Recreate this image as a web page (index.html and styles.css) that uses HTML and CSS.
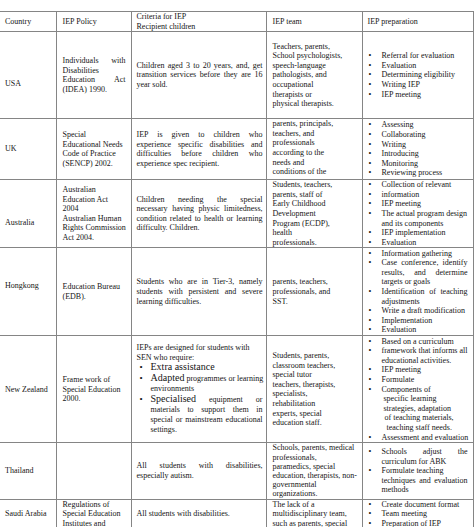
FILE: index.html
```html
<!DOCTYPE html>
<html>
<head>
<meta charset="utf-8">
<link rel="stylesheet" href="styles.css">
</head>
<body>
<table class="iep">
  <colgroup>
    <col class="w1"><col class="w2"><col class="w3"><col class="w4"><col class="w5">
  </colgroup>
  <tr class="r-head">
    <td>Country</td>
    <td class="c2">IEP Policy</td>
    <td class="c3"><span class="l">Criteria for IEP</span><span class="l">Recipient children</span></td>
    <td class="c4">IEP team</td>
    <td class="c5h">IEP preparation</td>
  </tr>
  <tr class="r-usa">
    <td class="c1 down">USA</td>
    <td class="c2">
      <span class="j">Individuals with</span>
      <span class="l">Disabilities</span>
      <span class="j">Education Act</span>
      <span class="l">(IDEA) 1990.</span>
    </td>
    <td class="c3">
      <span class="j">Children aged 3 to 20 years, and, get</span>
      <span class="j">transition services before they are 16</span>
      <span class="l">year sold.</span>
    </td>
    <td class="c4">
      <span class="l">Teachers, parents,</span>
      <span class="l">School psychologists,</span>
      <span class="l">speech-language</span>
      <span class="l">pathologists, and</span>
      <span class="l">occupational</span>
      <span class="l">therapists or</span>
      <span class="l">physical therapists.</span>
    </td>
    <td class="c5">
      <ul class="bl">
        <li><span class="b">•</span><span class="t">Referral for evaluation</span></li>
        <li><span class="b">•</span><span class="t">Evaluation</span></li>
        <li><span class="b">•</span><span class="t">Determining eligibility</span></li>
        <li><span class="b">•</span><span class="t">Writing IEP</span></li>
        <li><span class="b">•</span><span class="t">IEP meeting</span></li>
      </ul>
    </td>
  </tr>
  <tr class="r-uk">
    <td class="c1">UK</td>
    <td class="c2">
      <span class="l">Special</span>
      <span class="l">Educational Needs</span>
      <span class="l">Code of Practice</span>
      <span class="l">(SENCP) 2002.</span>
    </td>
    <td class="c3">
      <span class="j">IEP is given to children who</span>
      <span class="j">experience specific disabilities and</span>
      <span class="j">difficulties before children who</span>
      <span class="l">experience spec recipient.</span>
    </td>
    <td class="c4 top">
      <span class="l">parents, principals,</span>
      <span class="l">teachers, and</span>
      <span class="l">professionals</span>
      <span class="l">according to the</span>
      <span class="l">needs and</span>
      <span class="l">conditions of the</span>
    </td>
    <td class="c5">
      <ul class="bl">
        <li><span class="b">•</span><span class="t">Assessing</span></li>
        <li><span class="b">•</span><span class="t">Collaborating</span></li>
        <li><span class="b">•</span><span class="t">Writing</span></li>
        <li><span class="b">•</span><span class="t">Introducing</span></li>
        <li><span class="b">•</span><span class="t">Monitoring</span></li>
        <li><span class="b">•</span><span class="t">Reviewing process</span></li>
      </ul>
    </td>
  </tr>
  <tr class="r-au">
    <td class="c1 down">Australia</td>
    <td class="c2">
      <span class="l">Australian</span>
      <span class="l">Education Act</span>
      <span class="l">2004</span>
      <span class="l">Australian Human</span>
      <span class="l">Rights Commission</span>
      <span class="l">Act 2004.</span>
    </td>
    <td class="c3">
      <span class="j">Children needing the special</span>
      <span class="j">necessary having physic limitedness,</span>
      <span class="j">condition related to health or learning</span>
      <span class="l">difficulty. Children.</span>
    </td>
    <td class="c4">
      <span class="l">Students, teachers,</span>
      <span class="l">parents, staff of</span>
      <span class="l">Early Childhood</span>
      <span class="l">Development</span>
      <span class="l">Program (ECDP),</span>
      <span class="l">health</span>
      <span class="l">professionals.</span>
    </td>
    <td class="c5">
      <ul class="bl">
        <li><span class="b">•</span><span class="t">Collection of relevant</span></li>
        <li><span class="b">•</span><span class="t">information</span></li>
        <li><span class="b">•</span><span class="t">IEP meeting</span></li>
        <li><span class="b">•</span><span class="t"><span class="l">The actual program design</span><span class="l">and its components</span></span></li>
        <li><span class="b">•</span><span class="t">IEP implementation</span></li>
        <li><span class="b">•</span><span class="t">Evaluation</span></li>
      </ul>
    </td>
  </tr>
  <tr class="r-hk">
    <td class="c1 up">Hongkong</td>
    <td class="c2">
      <span class="l">Education Bureau</span>
      <span class="l">(EDB).</span>
    </td>
    <td class="c3">
      <span class="j">Students who are in Tier-3, namely</span>
      <span class="j">students with persistent and severe</span>
      <span class="l">learning difficulties.</span>
    </td>
    <td class="c4">
      <span class="l">parents, teachers,</span>
      <span class="l">professionals, and</span>
      <span class="l">SST.</span>
    </td>
    <td class="c5">
      <ul class="bl">
        <li><span class="b">•</span><span class="t">Information gathering</span></li>
        <li><span class="b">•</span><span class="t"><span class="j">Case conference, identify</span><span class="j">results, and determine</span><span class="l">targets or goals</span></span></li>
        <li><span class="b">•</span><span class="t"><span class="j">Identification of teaching</span><span class="l">adjustments</span></span></li>
        <li><span class="b">•</span><span class="t">Write a draft modification</span></li>
        <li><span class="b">•</span><span class="t">Implementation</span></li>
        <li><span class="b">•</span><span class="t">Evaluation</span></li>
      </ul>
    </td>
  </tr>
  <tr class="r-nz">
    <td class="c1">New Zealand</td>
    <td class="c2">
      <span class="l">Frame work of</span>
      <span class="l">Special Education</span>
      <span class="l">2000.</span>
    </td>
    <td class="c3">
      <span class="l">IEPs are designed for students with</span>
      <span class="l">SEN who require:</span>
      <ul class="bl big">
        <li><span class="b">•</span><span class="t"><span class="lg">Extra assistance</span></span></li>
        <li><span class="b">•</span><span class="t"><span class="l"><span class="lg">Adapted</span> programmes or learning</span><span class="l">environments</span></span></li>
        <li><span class="b">•</span><span class="t"><span class="j"><span class="lg">Specialised</span> equipment or</span><span class="j">materials to support them in</span><span class="j">special or mainstream educational</span><span class="l">settings.</span></span></li>
      </ul>
    </td>
    <td class="c4">
      <span class="l">Students, parents,</span>
      <span class="l">classroom teachers,</span>
      <span class="l">special tutor</span>
      <span class="l">teachers, therapists,</span>
      <span class="l">specialists,</span>
      <span class="l">rehabilitation</span>
      <span class="l">experts, special</span>
      <span class="l">education staff.</span>
    </td>
    <td class="c5">
      <ul class="bl">
        <li><span class="b">•</span><span class="t">Based on a curriculum</span></li>
        <li><span class="b">•</span><span class="t"><span class="j">framework that informs all</span><span class="l">educational activities.</span></span></li>
        <li><span class="b">•</span><span class="t">IEP meeting</span></li>
        <li><span class="b">•</span><span class="t">Formulate</span></li>
        <li><span class="b">•</span><span class="t"><span class="l">Components of</span><span class="l i2">specific learning</span><span class="l i2">strategies, adaptation</span><span class="l i3">of teaching materials,</span><span class="l i5">teaching staff needs.</span></span></li>
        <li><span class="b">•</span><span class="t">Assessment and evaluation</span></li>
      </ul>
    </td>
  </tr>
  <tr class="r-th">
    <td class="c1">Thailand</td>
    <td class="c2"></td>
    <td class="c3">
      <span class="j">All students with disabilities,</span>
      <span class="l">especially autism.</span>
    </td>
    <td class="c4 tight">
      <span class="l">Schools, parents, medical</span>
      <span class="l">professionals,</span>
      <span class="l">paramedics, special</span>
      <span class="l">education, therapists, non-</span>
      <span class="l">governmental</span>
      <span class="l">organizations.</span>
    </td>
    <td class="c5">
      <ul class="bl">
        <li><span class="b">•</span><span class="t"><span class="j">Schools adjust the</span><span class="l">curriculum for ABK</span></span></li>
        <li><span class="b">•</span><span class="t"><span class="l">Formulate teaching</span><span class="j">techniques and evaluation</span><span class="l">methods</span></span></li>
      </ul>
    </td>
  </tr>
  <tr class="r-sa">
    <td class="c1">Saudi Arabia</td>
    <td class="c2">
      <span class="l">Regulations of</span>
      <span class="l">Special Education</span>
      <span class="l">Institutes and</span>
    </td>
    <td class="c3">All students with disabilities.</td>
    <td class="c4">
      <span class="l">The lack of a</span>
      <span class="l">multidisciplinary team,</span>
      <span class="l">such as parents, special</span>
    </td>
    <td class="c5">
      <ul class="bl">
        <li><span class="b">•</span><span class="t">Create document format</span></li>
        <li><span class="b">•</span><span class="t">Team meeting</span></li>
        <li><span class="b">•</span><span class="t">Preparation of IEP</span></li>
      </ul>
    </td>
  </tr>
</table>
</body>
</html>
```
FILE: styles.css
```css
html, body {
  margin: 0;
  padding: 0;
  background: #ffffff;
}
body {
  font-family: "Liberation Serif", "Times New Roman", serif;
  font-size: 8px;
  line-height: 9.6px;
  color: #151515;
  overflow: hidden;
}
.iep {
  border-collapse: collapse;
  table-layout: fixed;
  width: 473px;
  margin-top: 11px;
}
.w1 { width: 56px; }
.w2 { width: 75px; }
.w3 { width: 135px; }
.w4 { width: 96px; }
.w5 { width: 111px; }

.iep td {
  border: 1px solid #858585;
  padding: 0 4px 0 5px;
  vertical-align: middle;
  overflow: hidden;
}
.iep td:first-child { border-left: none; }

.c2 { padding-left: 6px !important; padding-right: 5px !important; }
.c3 { padding-left: 5px !important; padding-right: 3px !important; }
.c4 { padding-left: 6px !important; padding-right: 3px !important; }
.c5h { padding-left: 5px !important; }
.c5 { padding-left: 6px !important; padding-right: 5px !important; }

.down { padding-top: 18px !important; }
.up { padding-bottom: 12px !important; }
.top { vertical-align: top !important; }
.tight { line-height: 9.2px; }

.r-head { height: 19px; }
.r-usa { height: 87px; }
.r-uk { height: 61px; }
.r-au { height: 66px; }
.r-hk { height: 88px; }
.r-nz { height: 107px; }
.r-th { height: 55px; }
.r-sa { height: 29px; }

.l {
  display: block;
  white-space: nowrap;
}
.j {
  display: block;
  text-align: justify;
  text-align-last: justify;
}
.i2 { padding-left: 2px; }
.i3 { padding-left: 3px; }
.i5 { padding-left: 5px; }

.bl {
  list-style: none;
  margin: 0;
  padding: 0;
}
.bl li {
  display: flex;
}
.bl .b {
  flex: none;
  width: 13px;
}
.bl .t {
  flex: 1;
  min-width: 0;
  white-space: nowrap;
}
.bl .t .j { white-space: normal; }

.big li { margin-left: 3px; line-height: 10px; }
.big .b { width: 11px; font-size: 9px; }
.lg { font-size: 10px; }
```
